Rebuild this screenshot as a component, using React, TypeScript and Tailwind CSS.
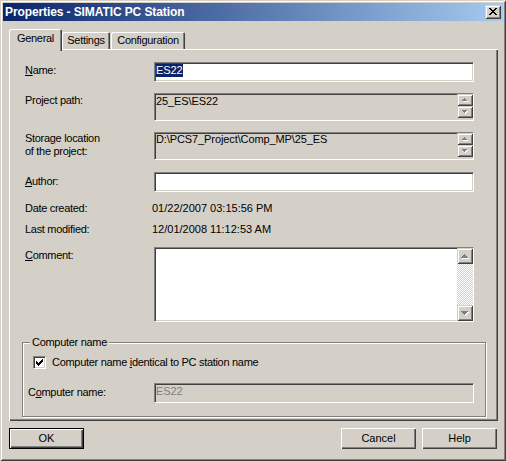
import React from "react";

type PixProps = { rows: string[]; color: string; x?: number; y?: number };
function Pix({ rows, color, x = 0, y = 0 }: PixProps) {
  const out: React.ReactNode[] = [];
  rows.forEach((r, j) =>
    r.split("").forEach((c, i) => {
      if (c === "X")
        out.push(<rect key={`${color}-${i}-${j}`} x={x + i} y={y + j} width={1} height={1} fill={color} />);
    })
  );
  return <>{out}</>;
}

const UP_BIG = ["...X...", "..XXX..", ".XXXXX.", "XXXXXXX"];
const DOWN_BIG = ["XXXXXXX", ".XXXXX.", "..XXX..", "...X..."];
const UP_SM = ["..X..", ".XXX.", "XXXXX"];
const DOWN_SM = ["XXXXX", ".XXX.", "..X.."];

function Arrow({ rows, w, h }: { rows: string[]; w: number; h: number }) {
  return (
    <svg width={w + 1} height={h + 1} viewBox={`0 0 ${w + 1} ${h + 1}`} shapeRendering="crispEdges">
      <Pix rows={rows} color="#ffffff" x={1} y={1} />
      <Pix rows={rows} color="#808080" />
    </svg>
  );
}

function ScrollBtn({ dir, small }: { dir: "up" | "down"; small?: boolean }) {
  const rows = small ? (dir === "up" ? UP_SM : DOWN_SM) : dir === "up" ? UP_BIG : DOWN_BIG;
  return (
    <div
      className={`${small ? "h-[12px]" : "h-[16px]"} w-[16px] bg-[#d4d0c8] flex items-center justify-center shadow-[inset_1px_1px_0_#d4d0c8,inset_-1px_-1px_0_#404040,inset_2px_2px_0_#ffffff,inset_-2px_-2px_0_#808080]`}
    >
      {small ? <Arrow rows={rows} w={5} h={3} /> : <Arrow rows={rows} w={7} h={4} />}
    </div>
  );
}

const sunken =
  "border border-t-[#808080] border-l-[#808080] border-b-white border-r-white shadow-[inset_1px_1px_0_#404040,inset_-1px_-1px_0_#d4d0c8]";

const btn =
  "w-[75px] h-[21px] bg-[#d4d0c8] flex items-center justify-center shadow-[inset_1px_1px_0_#ffffff,inset_-1px_-1px_0_#404040,inset_-2px_-2px_0_#808080]";

const CLOSE = ["XX....XX", ".XX..XX.", "..XXXX..", "...XX...", "..XXXX..", ".XX..XX.", "XX....XX"];
const CHECK = ["......X", ".....XX", "X...XXX", "XX.XXX.", "XXXXX..", ".XXX...", "..X...."];

export default function App() {
  return (
    <div className="w-[506px] h-[461px] bg-[#d4d0c8] p-[3px] flex flex-col shadow-[inset_1px_1px_0_#d4d0c8,inset_-1px_-1px_0_#404040,inset_2px_2px_0_#ffffff,inset_-2px_-2px_0_#808080] font-['Liberation_Sans',Arial,sans-serif] text-[11px] leading-[13px] text-black">
      {/* Title bar */}
      <div className="h-[18px] flex items-center justify-between pl-[2px] pr-[2px] bg-[linear-gradient(to_right,#0a246a,#a6caf0)]">
        <span className="text-white font-bold text-[12px] tracking-[-0.1px]">Properties - SIMATIC PC Station</span>
        <div className="w-[16px] h-[14px] bg-[#d4d0c8] shadow-[inset_1px_1px_0_#d4d0c8,inset_-1px_-1px_0_#404040,inset_2px_2px_0_#ffffff,inset_-2px_-2px_0_#808080]">
          <svg width="16" height="14" viewBox="0 0 16 14" shapeRendering="crispEdges">
            <Pix rows={CLOSE} color="#000000" x={4} y={3} />
          </svg>
        </div>
      </div>

      <div className="flex flex-col pl-[6px] pr-[5px] pt-[8px]">
        {/* Tabs */}
        <div className="h-[20px] flex items-end tracking-[-0.3px]">
          <div className="relative z-10 w-[53px] h-[22px] mb-[-2px] bg-[#d4d0c8] rounded-t-[2px] pt-[3px] text-center shadow-[inset_1px_1px_0_#ffffff,inset_-1px_0_0_#404040,inset_-2px_0_0_#808080]">
            General
          </div>
          <div className="w-[48px] h-[17px] bg-[#d4d0c8] rounded-t-[2px] pt-[2px] text-center shadow-[inset_1px_1px_0_#ffffff,inset_-1px_0_0_#404040,inset_-2px_0_0_#808080]">
            Settings
          </div>
          <div className="ml-[1px] w-[74px] h-[17px] bg-[#d4d0c8] rounded-t-[2px] pt-[2px] text-center shadow-[inset_1px_1px_0_#ffffff,inset_-1px_0_0_#404040,inset_-2px_0_0_#808080]">
            Configuration
          </div>
        </div>

        {/* Panel */}
        <div className="h-[372px] flex flex-col pt-[13px] shadow-[inset_1px_1px_0_#ffffff,inset_-1px_-1px_0_#404040,inset_-2px_-2px_0_#808080]">
          {/* Name */}
          <div className="flex pl-[16px]">
            <div className="w-[129px] pt-[2px] tracking-[-0.3px]">
              <u>N</u>ame:
            </div>
            <div className={`w-[320px] h-[20px] bg-white ${sunken} pl-[1px] pt-[1px] tracking-[-0.1px]`}>
              <span className="bg-[#0a246a] text-white inline-block h-[13px]">ES22</span>
            </div>
          </div>

          {/* Project path */}
          <div className="flex pl-[16px] mt-[11px]">
            <div className="w-[129px] pt-[1px] tracking-[-0.3px]">Project path:</div>
            <div className={`w-[320px] h-[28px] bg-[#d4d0c8] ${sunken} flex`}>
              <div className="flex-1 pl-[1px] pt-[1px] tracking-[-0.1px]">25_ES\ES22</div>
              <div className="flex flex-col">
                <ScrollBtn dir="up" small />
                <ScrollBtn dir="down" small />
              </div>
            </div>
          </div>

          {/* Storage */}
          <div className="flex pl-[16px] mt-[11px]">
            <div className="w-[129px] pt-[0px] tracking-[-0.3px]">
              Storage location
              <br />
              of the project:
            </div>
            <div className={`w-[320px] h-[28px] bg-[#d4d0c8] ${sunken} flex`}>
              <div className="flex-1 pl-[1px] pt-[0px] tracking-[-0.1px]">D:\PCS7_Project\Comp_MP\25_ES</div>
              <div className="flex flex-col">
                <ScrollBtn dir="up" small />
                <ScrollBtn dir="down" small />
              </div>
            </div>
          </div>

          {/* Author */}
          <div className="flex pl-[16px] mt-[12px]">
            <div className="w-[129px] pt-[3px] tracking-[-0.3px]">
              <u>A</u>uthor:
            </div>
            <div className={`w-[320px] h-[20px] bg-white ${sunken}`} />
          </div>

          {/* Dates */}
          <div className="flex pl-[16px] mt-[10px]">
            <div className="w-[127px] tracking-[-0.3px]">Date created:</div>
            <div>01/22/2007 03:15:56 PM</div>
          </div>
          <div className="flex pl-[16px] mt-[8px]">
            <div className="w-[127px] tracking-[-0.3px]">Last modified:</div>
            <div>12/01/2008 11:12:53 AM</div>
          </div>

          {/* Comment */}
          <div className="flex pl-[16px] mt-[11px]">
            <div className="w-[129px] pt-[2px] tracking-[-0.3px]">
              <u>C</u>omment:
            </div>
            <div className={`w-[320px] h-[75px] bg-white ${sunken} flex`}>
              <div className="flex-1" />
              <div className="w-[16px] flex flex-col">
                <ScrollBtn dir="up" />
                <div className="flex-1 bg-[image:repeating-conic-gradient(#ffffff_0%_25%,#d4d0c8_0%_50%)] bg-[length:2px_2px]" />
                <ScrollBtn dir="down" />
              </div>
            </div>
          </div>

          {/* Group box */}
          <div className="relative mt-[20px] ml-[13px] w-[464px] h-[75px] border border-[#808080] shadow-[1px_1px_0_#ffffff,inset_1px_1px_0_#ffffff]">
            <div className="absolute left-[7px] top-[-7px] px-[2px] bg-[#d4d0c8] tracking-[-0.3px]">Computer name</div>
            <div className="flex items-center mt-[13px] pl-[10px]">
              <div className="w-[13px] h-[13px] bg-white border border-t-[#808080] border-l-[#808080] border-b-white border-r-white shadow-[inset_1px_1px_0_#404040,inset_-1px_-1px_0_#d4d0c8]">
                <svg width="11" height="11" viewBox="0 0 11 11" shapeRendering="crispEdges">
                  <Pix rows={CHECK} color="#000000" x={2} y={2} />
                </svg>
              </div>
              <div className="ml-[6px] tracking-[-0.3px]">
                Computer name <u>i</u>dentical to PC station name
              </div>
            </div>
            <div className="flex mt-[14px] pl-[5px]">
              <div className="w-[126px] pt-[3px] tracking-[-0.3px]">
                C<u>o</u>mputer name:
              </div>
              <div className={`w-[320px] h-[20px] bg-[#d4d0c8] ${sunken} pl-[1px] pt-[1px] text-[#808080] tracking-[-0.1px]`}>
                ES22
              </div>
            </div>
          </div>
        </div>

        {/* Buttons */}
        <div className="flex mt-[7px] pr-[1px]">
          <div className={`${btn} border border-black`}>OK</div>
          <div className={`${btn} ml-auto`}>Cancel</div>
          <div className={`${btn} ml-[6px]`}>Help</div>
        </div>
      </div>
    </div>
  );
}
